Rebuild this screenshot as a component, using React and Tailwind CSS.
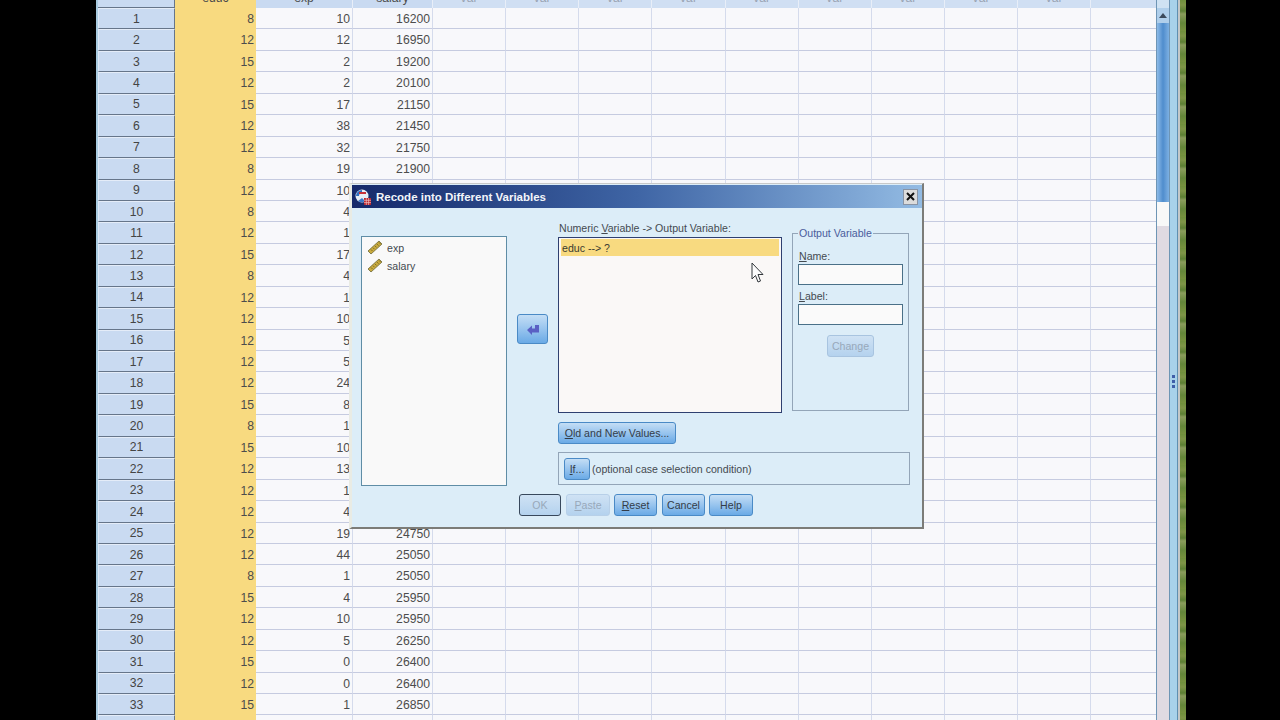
import React from "react";

const rows = [
  [8, 10, 16200], [12, 12, 16950], [15, 2, 19200], [12, 2, 20100], [15, 17, 21150],
  [12, 38, 21450], [12, 32, 21750], [8, 19, 21900], [12, 10, 22050], [8, 4, 22050],
  [12, 1, 22200], [15, 17, 22350], [8, 4, 22500], [12, 1, 22650], [12, 10, 22800],
  [12, 5, 22950], [12, 5, 23100], [12, 24, 23250], [15, 8, 23400], [8, 1, 23550],
  [15, 10, 23700], [12, 13, 23850], [12, 1, 24000], [12, 4, 24300], [12, 19, 24750],
  [12, 44, 25050], [8, 1, 25050], [15, 4, 25950], [12, 10, 25950], [12, 5, 26250],
  [15, 0, 26400], [12, 0, 26400], [15, 1, 26850], ["", "", ""],
];

const varCols = [1, 2, 3, 4, 5, 6, 7, 8, 9];

function RulerIcon() {
  return (
    <svg width="16" height="15" viewBox="0 0 16 15" className="shrink-0">
      <path d="M1 11 L12 1 L15 4 L4 14 Z" fill="#c9ab3e" stroke="#6f6a3a" strokeWidth="0.8" />
      <path d="M4 9.5 L5.5 11 M6 7.7 L7.5 9.2 M8 5.9 L9.5 7.4 M10 4.1 L11.5 5.6 M12 2.4 L13.5 3.9" stroke="#6b5a20" strokeWidth="0.8" />
    </svg>
  );
}

function AppIcon() {
  return (
    <svg width="16" height="16" viewBox="0 0 16 16" className="shrink-0">
      <circle cx="7" cy="7" r="6.5" fill="#e8eef6" />
      <path d="M1 7 A6 6 0 0 1 7 1 L7 4 A3 3 0 0 0 4 7 Z" fill="#2f6fc0" />
      <path d="M4 3 H11 V5 H4 Z" fill="#c8323a" />
      <path d="M3 12 A6 6 0 0 0 10 12 L7 9 Z" fill="#3a78c8" />
      <rect x="9" y="9" width="7" height="7" fill="#b8262e" />
      <path d="M11.3 9 V16 M13.6 9 V16 M9 11.3 H16 M9 13.6 H16" stroke="#f0c0c0" strokeWidth="0.7" />
    </svg>
  );
}

function Btn({ className, children }) {
  return (
    <div className={"flex items-center justify-center rounded-[3px] border border-[#4a8ac6] bg-gradient-to-b from-[#c4def5] to-[#6aaae6] text-[#333c48] " + className}>
      {children}
    </div>
  );
}

function DisabledBtn({ className, children }) {
  return (
    <div className={"flex items-center justify-center rounded-[3px] border bg-gradient-to-b from-[#cfe2f4] to-[#b4d2ee] text-[#98a8ba] " + className}>
      {children}
    </div>
  );
}

function Dialog() {
  return (
    <div className="absolute left-[349px] top-[183px] flex h-[346px] w-[575px] flex-col border-t border-b-[2px] border-l-[3px] border-r-[2px] border-t-[#c8c8c8] border-b-[#7c7c78] border-l-[#e9ebe4] border-r-[#7c7c78] bg-[#dcedf8] text-[10.6px] leading-[14px] text-[#444a50]">
      <div className="mt-px flex h-[23px] shrink-0 items-center bg-gradient-to-r from-[#16296a] via-[#3f65a5] to-[#93bbe3] pl-[3px] pr-[4px]">
        <AppIcon />
        <span className="ml-[5px] text-[11.5px] font-bold text-[#f2f5fa]">Recode into Different Variables</span>
        <div className="ml-auto flex h-[16px] w-[15px] items-center justify-center border border-[#8a94a4] bg-[#dcdcdc]">
          <svg width="9" height="9" viewBox="0 0 9 9">
            <path d="M1 1 L8 8 M8 1 L1 8" stroke="#111" strokeWidth="2" />
          </svg>
        </div>
      </div>

      <div className="flex items-start pl-[9px]">
        <div className="mt-[28px] flex h-[250px] w-[146px] shrink-0 flex-col gap-[3px] border border-[#5f8da6] bg-[#f9f9f9] pl-[5px] pt-[3px]">
          <div className="flex h-[15px] items-center gap-[4px]">
            <RulerIcon />
            <span>exp</span>
          </div>
          <div className="flex h-[15px] items-center gap-[4px]">
            <RulerIcon />
            <span>salary</span>
          </div>
        </div>

        <Btn className="ml-[10px] mt-[106px] h-[30px] w-[31px] shrink-0">
          <svg width="16" height="14" viewBox="0 0 16 14">
            <path d="M2 8 L7 3.5 V6.5 H10 V3 H14 V10.5 H7 V13 Z" fill="#5a60c4" />
          </svg>
        </Btn>

        <div className="ml-[10px] flex w-[352px] shrink-0 flex-col">
          <div className="mt-[13px] h-[16px] pl-px">
            Numeric <span className="underline">V</span>ariable -&gt; Output Variable:
          </div>
          <div className="flex items-start">
            <div className="h-[176px] w-[224px] shrink-0 border border-[#2f4070] bg-[#faf8f7] px-[2px] pt-px">
              <div className="flex h-[17px] items-center bg-[#f8da80] pl-px text-[#3a3a30]">educ --&gt; ?</div>
            </div>
            <fieldset className="-mt-[11px] ml-[10px] h-[185px] w-[116px] shrink-0 border border-[#93a5b8] px-[5px]">
              <legend className="px-px text-[#4a5c9c]">Output Variable</legend>
              <div className="mt-[9px] pl-px">
                <span className="underline">N</span>ame:
              </div>
              <div className="mt-px h-[21px] w-[105px] border border-[#4a7088] bg-[#fafafa]" />
              <div className="mt-[4px] h-[14px] pl-px">
                <span className="underline">L</span>abel:
              </div>
              <div className="mt-px h-[21px] w-[105px] border border-[#4a7088] bg-[#fafafa]" />
              <DisabledBtn className="mx-auto mt-[10px] h-[22px] w-[47px] border-[#a8c4e0]">Change</DisabledBtn>
            </fieldset>
          </div>
          <Btn className="mt-[9px] h-[22px] w-[118px]">
            <span>
              <span className="underline">O</span>ld and New Values...
            </span>
          </Btn>
          <div className="mt-[8px] flex h-[33px] items-center gap-[2px] border border-[#93a5b8] pl-[5px]">
            <Btn className="h-[22px] w-[26px]">
              <span>
                <span className="underline">I</span>f...
              </span>
            </Btn>
            <span>(optional case selection condition)</span>
          </div>
        </div>
      </div>

      <div className="mt-[8px] flex items-start pl-[167px]">
        <DisabledBtn className="h-[22px] w-[42px] border-[#38485c]">OK</DisabledBtn>
        <DisabledBtn className="ml-[5px] h-[22px] w-[44px] border-[#b8d0e8]">
          <span>
            <span className="underline">P</span>aste
          </span>
        </DisabledBtn>
        <Btn className="ml-[4px] h-[22px] w-[43px]">
          <span>
            <span className="underline">R</span>eset
          </span>
        </Btn>
        <Btn className="ml-[5px] h-[22px] w-[43px]">Cancel</Btn>
        <Btn className="ml-[4px] h-[22px] w-[44px]">Help</Btn>
      </div>

      <svg width="14" height="22" viewBox="0 0 14 22" className="absolute left-[399px] top-[78px]">
        <path d="M1 1 V17 L4.5 13.5 L7 20 L9.5 19 L7 12.5 L12 12.5 Z" fill="#fbfbfb" stroke="#33383c" strokeWidth="1" />
      </svg>
    </div>
  );
}

export default function App() {
  return (
    <div
      className="relative flex h-[720px] w-[1280px] overflow-hidden bg-black pl-[96px] text-[12.2px] text-[#4c4c4c]"
      style={{ fontFamily: '"Liberation Sans", Arial, sans-serif' }}
    >
      <div className="h-full w-[2px] shrink-0 bg-[#a9cbe0]" />

      <div className="flex h-full w-[1058px] shrink-0 flex-col overflow-hidden bg-[#f8f8fb]">
        <div className="flex h-[8px] shrink-0 items-end text-center leading-[14px]">
          <div className="flex h-full w-[77px] items-end border-b border-r border-[#66758a] bg-[#c9daf1]" />
          <div className="flex h-full w-[81px] items-end justify-center bg-[#f8da80] pb-[3px]">educ</div>
          <div className="flex h-full w-[97px] items-end justify-center border-r border-[#e8eef8] bg-[#c9daf1] pb-[3px]">exp</div>
          <div className="flex h-full w-[80px] items-end justify-center border-r border-[#e8eef8] bg-[#c9daf1] pb-[3px]">salary</div>
          {varCols.map((n) => (
            <div key={n} className="flex h-full w-[73.15px] items-end justify-center border-r border-[#e8eef8] bg-[#d0dff3] pb-[3px] text-[#9aa4b4]">var</div>
          ))}
          <div className="h-full flex-1 bg-[#d0dff3]" />
        </div>

        {rows.map((r, i) => (
          <div key={i} className="flex h-[21.45px] shrink-0 leading-[22px]">
            <div className="flex w-[77px] shrink-0 items-center justify-center border-b border-r border-l border-t border-b-[#66758a] border-l-[#dce8f6] border-r-[#66758a] border-t-[#e4ecf8] bg-[#c9daf1] text-[#444]">{i + 1}</div>
            <div className="w-[81px] shrink-0 bg-[#f8da80] pr-[2px] text-right">{r[0]}</div>
            <div className="w-[97px] shrink-0 border-b border-r border-b-[#c6cbe0] border-r-[#d5dbec] pr-[2px] text-right">{r[1]}</div>
            <div className="w-[80px] shrink-0 border-b border-r border-b-[#c6cbe0] border-r-[#d5dbec] pr-[2px] text-right">{r[2]}</div>
            {varCols.map((n) => (
              <div key={n} className="w-[73.15px] shrink-0 border-b border-r border-b-[#c6cbe0] border-r-[#d5dbec]" />
            ))}
            <div className="flex-1 border-b border-[#c6cbe0]" />
          </div>
        ))}
      </div>

      <div className="flex h-full w-[14px] shrink-0 flex-col border-x border-x-[#6e95b5] bg-[#e0dae2]">
        <div className="h-[8px] shrink-0 bg-[#cfe2f3]" />
        <div className="flex h-[15px] shrink-0 items-center justify-center bg-[#b0cfeb]">
          <svg width="8" height="5" viewBox="0 0 8 5">
            <path d="M4 0 L8 5 H0 Z" fill="#3c4a5c" />
          </svg>
        </div>
        <div className="h-[179px] shrink-0 bg-gradient-to-r from-[#8dbbe8] via-[#4f8dcd] to-[#7db0e2]" />
        <div className="h-[24px] shrink-0 bg-[#f8f8f8]" />
      </div>

      <div className="flex h-full w-[8px] shrink-0 items-center justify-center border-r border-[#5f8fb0] bg-[#a8d2ea]">
        <div className="mb-[-42px] flex flex-col gap-[2px]">
          <div className="h-[3px] w-[3px] bg-[#3f5fa8]" />
          <div className="h-[3px] w-[3px] bg-[#3f5fa8]" />
          <div className="h-[3px] w-[3px] bg-[#3f5fa8]" />
        </div>
      </div>
      <div className="h-full w-[2px] shrink-0 bg-[#c4c8c8]" />
      <div className="h-full w-[6px] shrink-0 bg-[repeating-linear-gradient(180deg,#6f8f3c_0px,#7f9548_5px,#5c7f34_11px,#8a9c5c_14px,#64863a_23px,#77913f_31px)]" />

      <Dialog />
    </div>
  );
}
